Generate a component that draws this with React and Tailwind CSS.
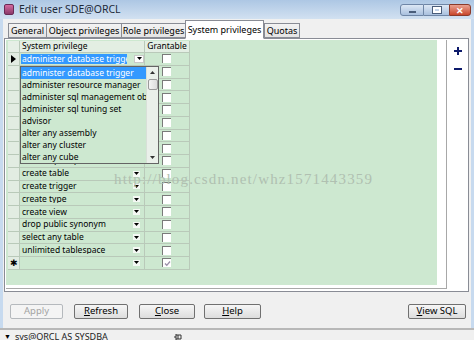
import React from 'react'

// rows 2-8 sit under the open list, so their names are not shown
const rows = [
  'administer database trigger',
  '',
  '',
  '',
  '',
  '',
  '',
  '',
  'create synonym',
  'create table',
  'create trigger',
  'create type',
  'create view',
  'drop public synonym',
  'select any table',
  'unlimited tablespace',
]

const listItems = [
  'administer database trigger',
  'administer resource manager',
  'administer sql management object',
  'administer sql tuning set',
  'advisor',
  'alter any assembly',
  'alter any cluster',
  'alter any cube',
]

const DownArrow = () => (
  <svg width="5" height="3" viewBox="0 0 5 3">
    <path d="M0 0h5L2.5 3z" fill="#000" />
  </svg>
)

const Checkbox = ({ checked }) => (
  <div className="w-[9px] h-[9px] bg-white border-t border-l border-[#7a7a7a] flex items-center justify-center">
    {checked && (
      <svg width="7" height="7" viewBox="0 0 7 7">
        <path d="M1 3.5l1.8 1.8L6 1.5" stroke="#9a8fa8" strokeWidth="1.3" fill="none" />
      </svg>
    )}
  </div>
)

const Button = ({ children, className = '', disabled }) => (
  <div
    className={`h-[15px] flex items-center justify-center rounded-[2px] border text-[9.5px] ${
      disabled
        ? 'border-[#b5b9bd] bg-[#f4f4f4] text-[#a3a3a3]'
        : 'border-[#707070] bg-gradient-to-b from-[#f6f6f6] to-[#dddddd] text-black'
    } ${className}`}
  >
    {children}
  </div>
)

const Tab = ({ children, w, active }) => (
  <div
    className={`${w} flex items-center justify-center border border-[#898c95] text-[9px] whitespace-nowrap ${
      active
        ? 'h-[19px] bg-white border-b-white -mb-px relative z-10'
        : 'h-[15px] bg-gradient-to-b from-[#f3f3f3] to-[#e3e3e3] -mr-px'
    }`}
  >
    {children}
  </div>
)

export default function App() {
  return (
    <div className="relative w-[474px] h-[340px] overflow-hidden bg-[#c7daef] flex flex-col font-['Noto_Sans',sans-serif] text-black">
      {/* title bar */}
      <div className="h-[19px] shrink-0 flex items-center bg-gradient-to-b from-[#adc7e4] to-[#d2e1f1]">
        <div className="ml-[4px] w-[10px] h-[11px] rounded-[2px] bg-gradient-to-b from-[#d56aa0] to-[#8b3a6a] border border-[#6a2a55]" />
        <span className="ml-[5px] text-[10.5px] text-[#1e2a3a]">Edit user SDE@ORCL</span>
        <div className="ml-auto mr-[3px] flex items-start self-start mt-[4px]">
          <div className="w-[24px] h-[12px] rounded-l-[3px] border border-[#6f86a6] bg-gradient-to-b from-[#dde8f5] to-[#a9c0de] flex items-center justify-center">
            <div className="w-[7px] h-[2px] mt-[3px] bg-white border border-[#4a5d7a]" />
          </div>
          <div className="w-[25px] h-[12px] border-y border-[#6f86a6] bg-gradient-to-b from-[#dde8f5] to-[#a9c0de] flex items-center justify-center">
            <div className="w-[8px] h-[6px] border-2 border-white outline outline-1 outline-[#4a5d7a]" />
          </div>
          <div className="w-[22px] h-[12px] rounded-r-[3px] border border-[#8a3a2a] bg-gradient-to-b from-[#e8a090] to-[#c8452a] flex items-center justify-center text-white text-[9px] font-bold leading-none">
            ✕
          </div>
        </div>
      </div>

      {/* dialog body */}
      <div className="mx-[3px] h-[309px] shrink-0 bg-[#f0f0f0] flex flex-col">
        {/* tabs */}
        <div className="h-[19px] flex items-end pl-[5px]">
          <Tab w="w-[39px]">General</Tab>
          <Tab w="w-[76px]">Object privileges</Tab>
          <Tab w="w-[65px]">Role privileges</Tab>
          <Tab w="w-[79px]" active>System privileges</Tab>
          <Tab w="w-[36px]">Quotas</Tab>
        </div>

        {/* panel */}
        <div className="ml-[1px] w-[465px] h-[254px] border border-[#898c95] bg-white flex pt-[1px] pl-[1px]">
          <div className="w-[441px] h-[249px] border-r border-b border-[#a8a8a8] flex">
            <div className="w-[431px] h-[245px] bg-[#cde8d0] pl-[2px] pt-[1px]">
              {/* header */}
              <div className="flex h-[12px] text-[8.5px] leading-none">
                <div className="w-[12px] bg-[#e6efe6] border-r border-b border-[#b9c9b9]" />
                <div className="w-[125px] bg-[#e3eee3] border-r border-b border-[#b9c9b9] flex items-center pl-[2px]">
                  System privilege
                </div>
                <div className="w-[45px] bg-[#e3eee3] border-r border-b border-[#b9c9b9] flex items-center justify-center">
                  Grantable
                </div>
              </div>
              {rows.map((name, i) => (
                <div key={i} className="flex h-[12.75px] text-[8.5px] leading-none">
                  <div className="w-[12px] bg-[#e2ece2] border-r border-b border-[#b9c9b9] flex items-center justify-center">
                    {i === 0 && (
                      <svg width="5" height="8" viewBox="0 0 5 8">
                        <path d="M0 0l5 4-5 4z" fill="#000" />
                      </svg>
                    )}
                  </div>
                  <div className="w-[125px] border-r border-b border-[#b9c9b9] flex items-center">
                    {i === 0 ? (
                      <>
                        <span className="ml-[1px] w-[106px] h-[10px] bg-[#3399ff] text-white flex items-center pl-[1px] overflow-hidden whitespace-nowrap">
                          {name}
                        </span>
                        <div className="ml-[7px] w-[10px] h-[8px] bg-white border border-[#c8c8c8] flex items-center justify-center">
                          <DownArrow />
                        </div>
                      </>
                    ) : (
                      <>
                        <span className="pl-[2px] flex-1 whitespace-nowrap overflow-hidden">{name}</span>
                        <div className="w-[7px] h-[6px] bg-[#f4f8f4] mr-[4px] flex items-center justify-center">
                          <DownArrow />
                        </div>
                      </>
                    )}
                  </div>
                  <div className="w-[45px] border-r border-b border-[#b9c9b9] flex items-center pl-[17px]">
                    <Checkbox />
                  </div>
                </div>
              ))}
              {/* new row */}
              <div className="flex h-[12.75px] text-[8.5px] leading-none">
                <div className="w-[12px] bg-[#e2ece2] border-r border-b border-[#b9c9b9] flex items-center justify-center text-[9px]">
                  ✱
                </div>
                <div className="w-[125px] border-r border-b border-[#b9c9b9] flex items-center justify-end">
                  <div className="w-[7px] h-[6px] bg-[#f4f8f4] mr-[4px] flex items-center justify-center">
                    <DownArrow />
                  </div>
                </div>
                <div className="w-[45px] border-r border-b border-[#b9c9b9] flex items-center pl-[17px]">
                  <Checkbox checked />
                </div>
              </div>
            </div>
            <div className="flex-1 bg-white" />
          </div>
          {/* add / remove */}
          <div className="flex-1 flex flex-col items-center pt-[7px] gap-[10px]">
            <svg width="8" height="8" viewBox="0 0 8 8">
              <path d="M3 0h2v3h3v2H5v3H3V5H0V3h3z" fill="#0d1a6b" />
            </svg>
            <svg width="8" height="8" viewBox="0 0 8 8">
              <path d="M0 3h8v2H0z" fill="#0d1a6b" />
            </svg>
          </div>
        </div>

        {/* buttons */}
        <div className="mt-[12px] flex items-center">
          <Button disabled className="ml-[7px] w-[53px]">Apply</Button>
          <Button className="ml-[11px] w-[54px]">
            <span><span className="underline">R</span>efresh</span>
          </Button>
          <Button className="ml-[11px] w-[56px]">
            <span><span className="underline">C</span>lose</span>
          </Button>
          <Button className="ml-[9px] w-[57px]">
            <span><span className="underline">H</span>elp</span>
          </Button>
          <Button className="ml-auto mr-[5px] w-[58px]">
            <span><span className="underline">V</span>iew SQL</span>
          </Button>
        </div>
      </div>

      {/* status bar of parent window */}
      <div className="flex-1 border-t-2 border-[#b8b8b8] bg-[#f0f0f0] flex items-start pt-[2px] text-[9px] leading-none">
        <span className="ml-[4px] text-[7px] mt-[1px]">▼</span>
        <span className="ml-[4px] text-[#222]">sys@ORCL AS SYSDBA</span>
        <svg className="ml-[66px] mt-[1px]" width="8" height="8" viewBox="0 0 8 8">
          <path d="M0 4h2M2 1v6M2 2h5v4H2M4 2v4" stroke="#333" strokeWidth="1" fill="none" />
        </svg>
      </div>

      {/* open dropdown list */}
      <div className="absolute left-[20px] top-[66px] w-[139px] h-[98px] border border-[#646464] bg-[#cde8d0] flex text-[8.5px] leading-none z-20">
        <div className="flex-1 flex flex-col overflow-hidden">
          {listItems.map((t, i) => (
            <div
              key={i}
              className={`h-[12px] shrink-0 flex items-center pl-[1px] whitespace-nowrap ${
                i === 0 ? 'bg-[#3399ff] text-white' : ''
              }`}
            >
              {t}
            </div>
          ))}
        </div>
        <div className="w-[12px] bg-[#eaf0ea] border-l border-[#d8e0d8] flex flex-col items-center">
          <svg className="mt-[4px]" width="5" height="3" viewBox="0 0 5 3">
            <path d="M0 3h5L2.5 0z" fill="#333" />
          </svg>
          <div className="mt-[5px] w-[10px] h-[11px] rounded-[2px] border border-[#9a9a9a] bg-gradient-to-r from-[#f4f4f4] to-[#dcdcdc]" />
          <svg className="mt-auto mb-[4px]" width="5" height="3" viewBox="0 0 5 3">
            <path d="M0 0h5L2.5 3z" fill="#333" />
          </svg>
        </div>
      </div>

      {/* watermark */}
      <div className="absolute left-[114px] top-[168px] text-[15px] tracking-[1.15px] text-[#b0c0b1] font-['Liberation_Serif',serif] pointer-events-none z-30">
        http://blog.csdn.net/whz1571443359
      </div>
    </div>
  )
}
